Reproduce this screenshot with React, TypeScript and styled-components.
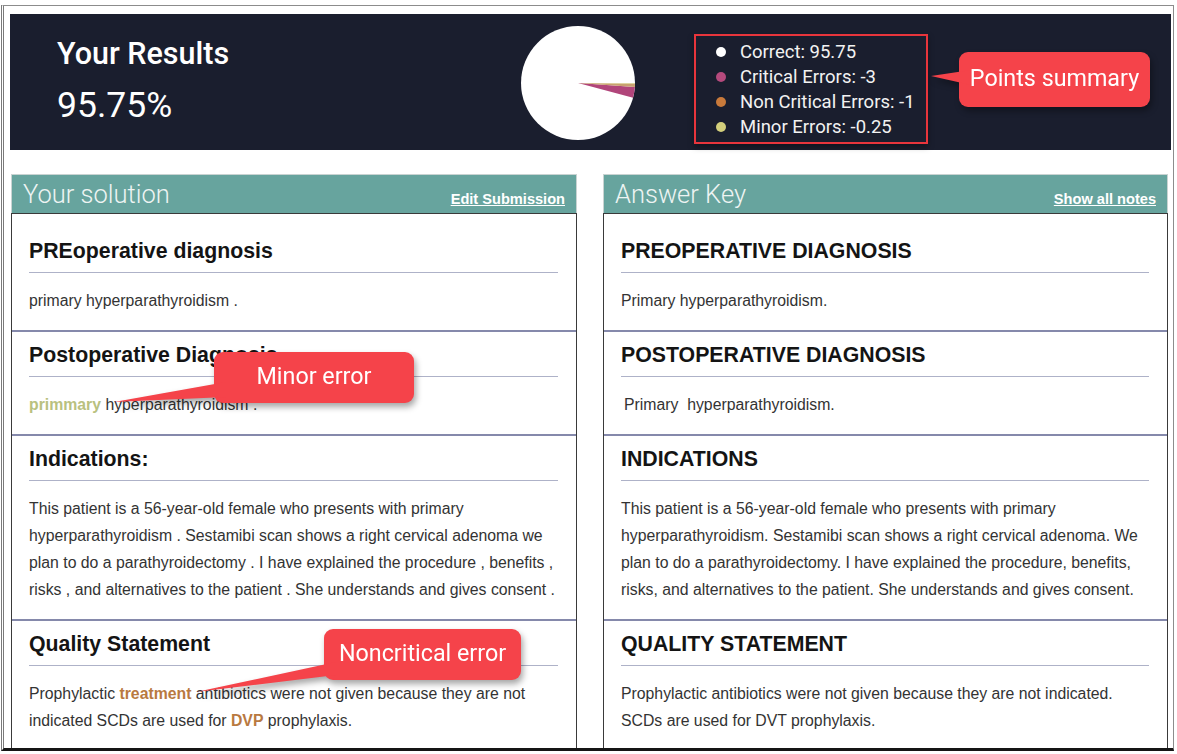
import React from "react";
import styled, { createGlobalStyle } from "styled-components";

const GlobalStyle = createGlobalStyle`
  html, body { margin: 0; padding: 0; background: #ffffff; }
  body { font-family: "Liberation Sans", Arial, sans-serif; }
  * { box-sizing: border-box; }
`;

const Frame = styled.div`
  position: relative;
  margin: 5px 0 0 1px;
  width: 1173px;
  height: 746px;
  border: 1px solid #8c8c8c;
  border-left: 3px double #7a7a7a;
  border-bottom: 3px solid #151515;
  padding: 8px 2px 0 6px;
  overflow: hidden;
`;

const Header = styled.header`
  height: 136px;
  background: #1a1e2e;
  display: flex;
  align-items: center;
  padding-left: 47px;
`;

const ResultBlock = styled.div`
  width: 463px;
  display: flex;
  flex-direction: column;
  gap: 12px;
  color: #ffffff;
  font-family: Roboto, "Liberation Sans", sans-serif;
  margin-top: -2px;
`;

const ResultTitle = styled.div`
  font-size: 30.5px;
  font-weight: 500;
  line-height: 36px;
`;

const ResultValue = styled.div`
  font-size: 35.5px;
  font-weight: 400;
  line-height: 42px;
`;

const Pie = styled.svg`
  width: 116px;
  height: 116px;
  flex: none;
  margin-top: 2px;
`;

const Legend = styled.ul`
  list-style: none;
  margin: 13px 0 0 58px;
  padding: 4px 8px 2px 20px;
  width: 234px;
  height: 110px;
  border: 2px solid #e8353c;
  box-shadow: 0 3px 6px rgba(0, 0, 0, 0.35);
  display: flex;
  flex-direction: column;
`;

const LegendItem = styled.li`
  display: flex;
  align-items: center;
  height: 25.8px;
  color: #f2f2f2;
  font-family: Roboto, "Liberation Sans", sans-serif;
  font-size: 18.5px;
  white-space: nowrap;
`;

const Dot = styled.span<{ $c: string }>`
  width: 10px;
  height: 10px;
  border-radius: 50%;
  background: ${(p) => p.$c};
  margin-right: 14px;
  flex: none;
`;

const Panels = styled.div`
  display: grid;
  grid-template-columns: 566px 565px;
  column-gap: 26px;
  margin: 24px 0 0 1px;
`;

const Panel = styled.section`
  display: flex;
  flex-direction: column;
`;

const PanelHead = styled.div`
  height: 39px;
  background: #67a49e;
  border: 1px solid #c9d3d2;
  border-bottom: none;
  display: flex;
  align-items: center;
  justify-content: space-between;
  padding: 0 11px 0 11px;
`;

const PanelTitle = styled.h2`
  margin: 0;
  font-family: Roboto, "Liberation Sans", sans-serif;
  font-weight: 300;
  font-size: 25.5px;
  color: #eef4f3;
  line-height: 30px;
`;

const PanelLink = styled.a`
  font-family: "Liberation Sans", Arial, sans-serif;
  font-weight: 700;
  font-size: 14.6px;
  color: #ffffff;
  text-decoration: underline;
  margin-top: 9px;
`;

const PanelBody = styled.div`
  border: 1px solid #3a3a3a;
  background: #ffffff;
`;

const Section = styled.div<{ $first?: boolean }>`
  padding: ${(p) => (p.$first ? "25px" : "11px")} 18px 16px 17px;
  border-bottom: 2px solid #8589ab;
`;

const SectionTitle = styled.h3`
  margin: 0;
  font-family: "Liberation Sans", Arial, sans-serif;
  font-weight: 700;
  font-size: 21.3px;
  line-height: 24px;
  color: #141414;
  padding-bottom: 9px;
  border-bottom: 1px solid #aeb2c8;
`;

const SectionText = styled.p<{ $indent?: boolean }>`
  margin: 14px 0 0 ${(p) => (p.$indent ? "3px" : "0")};
  font-family: "Liberation Sans", Arial, sans-serif;
  font-size: 15.8px;
  line-height: 27px;
  color: #333333;
  white-space: nowrap;
`;

const Mark = styled.span<{ $c: string }>`
  color: ${(p) => p.$c};
  font-weight: 700;
`;

const Callout = styled.div<{ $x: number; $y: number; $w: number; $h: number }>`
  position: absolute;
  left: ${(p) => p.$x}px;
  top: ${(p) => p.$y}px;
  width: ${(p) => p.$w}px;
  height: ${(p) => p.$h}px;
  filter: drop-shadow(2px 4px 3px rgba(0, 0, 0, 0.35));
  z-index: 5;
`;

const CalloutBox = styled.div`
  position: relative;
  width: 100%;
  height: 100%;
  background: #f5434a;
  border-radius: 9px;
  display: flex;
  align-items: center;
  justify-content: center;
  color: #ffffff;
  font-family: Roboto, "Liberation Sans", sans-serif;
  font-size: 23.3px;
  font-weight: 400;
  padding-bottom: 3px;
  white-space: nowrap;
`;

const Tail = styled.svg`
  position: absolute;
  left: 0;
  top: 0;
  width: 1px;
  height: 1px;
  overflow: visible;
`;

function polar(cx: number, cy: number, r: number, deg: number) {
  const a = (deg * Math.PI) / 180;
  return [cx + r * Math.cos(a), cy + r * Math.sin(a)];
}

function slice(cx: number, cy: number, r: number, a0: number, a1: number) {
  const [x0, y0] = polar(cx, cy, r, a0);
  const [x1, y1] = polar(cx, cy, r, a1);
  const large = a1 - a0 > 180 ? 1 : 0;
  return `M${cx},${cy} L${x0},${y0} A${r},${r} 0 ${large} 1 ${x1},${y1} Z`;
}

type CalloutProps = {
  x: number;
  y: number;
  w: number;
  h: number;
  tip: [number, number];
  base: [number, number];
  children: React.ReactNode;
};

function Bubble({ x, y, w, h, tip, base, children }: CalloutProps) {
  return (
    <Callout $x={x} $y={y} $w={w} $h={h}>
      <CalloutBox>
        <Tail>
          <polygon
            points={`${tip[0]},${tip[1]} 12,${base[0]} 12,${base[1]}`}
            fill="#f5434a"
          />
        </Tail>
        {children}
      </CalloutBox>
    </Callout>
  );
}

const legend = [
  { c: "#ffffff", t: "Correct: 95.75" },
  { c: "#b54a7d", t: "Critical Errors: -3" },
  { c: "#c97a3b", t: "Non Critical Errors: -1" },
  { c: "#d3cf7c", t: "Minor Errors: -0.25" },
];

export default function App() {
  return (
    <>
      <GlobalStyle />
      <Frame>
        <Header>
          <ResultBlock>
            <ResultTitle>Your Results</ResultTitle>
            <ResultValue>95.75%</ResultValue>
          </ResultBlock>
          <Pie viewBox="0 0 116 116">
            <circle cx="58" cy="58" r="57" fill="#ffffff" />
            <path d={slice(58, 58, 57, 4, 15)} fill="#b1457a" />
            <path d={slice(58, 58, 57, 0.8, 4)} fill="#c9a070" />
            <path d={slice(58, 58, 57, 0, 0.8)} fill="#d6d089" />
          </Pie>
          <Legend>
            {legend.map((l) => (
              <LegendItem key={l.t}>
                <Dot $c={l.c} />
                {l.t}
              </LegendItem>
            ))}
          </Legend>
        </Header>

        <Panels>
          <Panel>
            <PanelHead>
              <PanelTitle>Your solution</PanelTitle>
              <PanelLink>Edit Submission</PanelLink>
            </PanelHead>
            <PanelBody>
              <Section $first>
                <SectionTitle>PREoperative diagnosis</SectionTitle>
                <SectionText>primary hyperparathyroidism .</SectionText>
              </Section>
              <Section>
                <SectionTitle>Postoperative Diagnosis</SectionTitle>
                <SectionText>
                  <Mark $c="#b9c17f">primmary</Mark> hyperparathyroidism .
                </SectionText>
              </Section>
              <Section>
                <SectionTitle>Indications:</SectionTitle>
                <SectionText>
                  This patient is a 56-year-old female who presents with primary
                  <br />
                  hyperparathyroidism . Sestamibi scan shows a right cervical adenoma we
                  <br />
                  plan to do a parathyroidectomy . I have explained the procedure , benefits ,
                  <br />
                  risks , and alternatives to the patient . She understands and gives consent .
                </SectionText>
              </Section>
              <Section>
                <SectionTitle>Quality Statement</SectionTitle>
                <SectionText>
                  Prophylactic <Mark $c="#b9793f">treatment</Mark> antibiotics were not
                  given because they are not
                  <br />
                  indicated SCDs are used for <Mark $c="#b9793f">DVP</Mark> prophylaxis.
                </SectionText>
              </Section>
            </PanelBody>
          </Panel>

          <Panel>
            <PanelHead>
              <PanelTitle>Answer Key</PanelTitle>
              <PanelLink>Show all notes</PanelLink>
            </PanelHead>
            <PanelBody>
              <Section $first>
                <SectionTitle>PREOPERATIVE DIAGNOSIS</SectionTitle>
                <SectionText>Primary hyperparathyroidism.</SectionText>
              </Section>
              <Section>
                <SectionTitle>POSTOPERATIVE DIAGNOSIS</SectionTitle>
                <SectionText $indent>Primary&nbsp; hyperparathyroidism.</SectionText>
              </Section>
              <Section>
                <SectionTitle>INDICATIONS</SectionTitle>
                <SectionText>
                  This patient is a 56-year-old female who presents with primary
                  <br />
                  hyperparathyroidism. Sestamibi scan shows a right cervical adenoma. We
                  <br />
                  plan to do a parathyroidectomy. I have explained the procedure, benefits,
                  <br />
                  risks, and alternatives to the patient. She understands and gives consent.
                </SectionText>
              </Section>
              <Section>
                <SectionTitle>QUALITY STATEMENT</SectionTitle>
                <SectionText>
                  Prophylactic antibiotics were not given because they are not indicated.
                  <br />
                  SCDs are used for DVT prophylaxis.
                </SectionText>
              </Section>
            </PanelBody>
          </Panel>
        </Panels>

        <Bubble x={955} y={46} w={191} h={55} tip={[-28, 24]} base={[18, 33]}>
          Points summary
        </Bubble>
        <Bubble x={210} y={346} w={200} h={51} tip={[-100, 50]} base={[30, 45]}>
          Minor error
        </Bubble>
        <Bubble x={320} y={623} w={197} h={51} tip={[-128, 63]} base={[33, 46]}>
          Noncritical error
        </Bubble>
      </Frame>
    </>
  );
}
